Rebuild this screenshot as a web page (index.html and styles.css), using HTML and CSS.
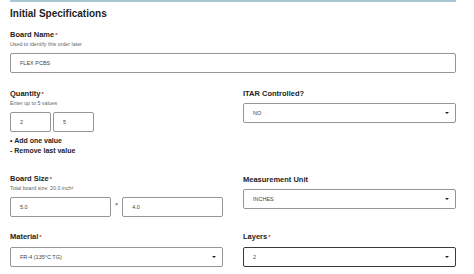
FILE: index.html
```html
<!DOCTYPE html>
<html lang="en">
<head>
  <meta charset="UTF-8">
  <meta name="viewport" content="width=device-width, initial-scale=1.0">
  <title>Initial Specifications</title>
  <link rel="stylesheet" href="styles.css">
</head>
<body>
  <div class="page">
    <div class="title">Initial Specifications</div>

    <div class="field">
      <div class="label">Board Name<span class="req">*</span></div>
      <div class="hint">Used to identify this order later</div>
      <div class="control">FLEX PCBS</div>
    </div>

    <div class="row row-qty">
      <div class="field">
        <div class="label">Quantity<span class="req">*</span></div>
        <div class="hint">Enter up to 5 values</div>
        <div class="qty-list">
          <div class="control qty">2</div>
          <div class="control qty">5</div>
        </div>
        <div class="action">&bull; Add one value</div>
        <div class="action">- Remove last value</div>
      </div>
      <div class="field">
        <div class="label">ITAR Controlled?</div>
        <div class="control select">NO<span class="caret"></span></div>
      </div>
    </div>

    <div class="row row-size">
      <div class="field">
        <div class="label">Board Size<span class="req">*</span></div>
        <div class="hint">Total board size: 20.0 inch&sup2;</div>
        <div class="size-list">
          <div class="control">5.0</div>
          <span class="times">&times;</span>
          <div class="control">4.0</div>
        </div>
      </div>
      <div class="field field-unit">
        <div class="label">Measurement Unit</div>
        <div class="control select">INCHES<span class="caret"></span></div>
      </div>
    </div>

    <div class="row row-mat">
      <div class="field">
        <div class="label">Material<span class="req">*</span></div>
        <div class="control select">FR-4 (135&deg;C TG)<span class="caret"></span></div>
      </div>
      <div class="field">
        <div class="label">Layers<span class="req">*</span></div>
        <div class="control select active">2<span class="caret"></span></div>
      </div>
    </div>
  </div>
</body>
</html>
```

FILE: styles.css
```css
body {
  font-family: "Liberation Sans", Arial, sans-serif;
  background-color: #fff;
  margin: 0;
  padding: 0;
  overflow: hidden;
  color: #222;
}
.page {
  width: 446px;
  margin: 0 0 0 10px;
  border-top: 2px solid #a9c6d4;
}
.title {
  font-size: 10px;
  line-height: 12px;
  font-weight: bold;
  margin-top: 6px;
  margin-bottom: 10px;
  color: #1e1e1e;
}
.label {
  font-size: 7.5px;
  line-height: 9px;
  font-weight: bold;
  color: #222;
}
.req {
  color: #c8302c;
  font-size: 6px;
  margin-left: 1px;
}
.hint {
  font-size: 5.3px;
  line-height: 7px;
  color: #666;
  margin-top: 1px;
}
.control {
  box-sizing: border-box;
  height: 20px;
  margin-top: 5px;
  padding: 0 6px 0 9px;
  border: 1px solid #959595;
  border-radius: 2px;
  font-size: 5.5px;
  color: #444;
  display: flex;
  align-items: center;
  justify-content: space-between;
}
.select {
  margin-top: 5px;
}
.active {
  border-color: #3a3a3a;
}
.caret {
  width: 0;
  height: 0;
  border-left: 2px solid transparent;
  border-right: 2px solid transparent;
  border-top: 2.5px solid #222;
}
.row {
  display: grid;
  grid-template-columns: 213px 213px;
  column-gap: 20px;
  align-items: start;
}
.row-qty {
  margin-top: 16px;
}
.row-size {
  margin-top: 18px;
}
.row-mat {
  margin-top: 15px;
}
.field-unit {
  padding-top: 1px;
}
.qty-list {
  display: flex;
  gap: 2px;
}
.qty {
  width: 41px;
}
.action {
  font-size: 7px;
  line-height: 10px;
  font-weight: bold;
  color: #222;
}
.qty-list + .action {
  margin-top: 4px;
}
.size-list {
  display: flex;
  align-items: flex-start;
  gap: 4px;
}
.size-list .control {
  flex: 1;
}
.times {
  font-size: 6px;
  line-height: 8px;
  margin-top: 8px;
  color: #444;
}
```
